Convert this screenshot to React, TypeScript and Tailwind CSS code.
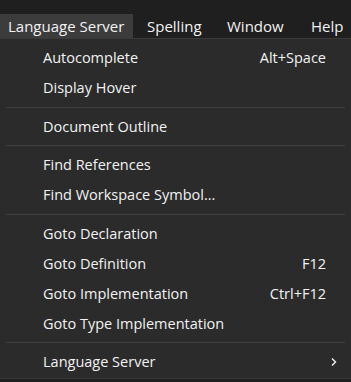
import React from "react";

type Item = { label: string; shortcut?: string; sub?: boolean } | "sep";

const items: Item[] = [
  { label: "Autocomplete", shortcut: "Alt+Space" },
  { label: "Display Hover" },
  "sep",
  { label: "Document Outline" },
  "sep",
  { label: "Find References" },
  { label: "Find Workspace Symbol..." },
  "sep",
  { label: "Goto Declaration" },
  { label: "Goto Definition", shortcut: "F12" },
  { label: "Goto Implementation", shortcut: "Ctrl+F12" },
  { label: "Goto Type Implementation" },
  "sep",
  { label: "Language Server", sub: true },
];

export default function App() {
  return (
    <div
      className="w-[351px] h-[382px] bg-[#1f1f1f] text-[#f2f2f2] overflow-hidden"
      style={{ fontFamily: '"Open Sans", "Noto Sans", sans-serif' }}
    >
      <div className="h-[14px]" />
      <div className="flex h-[24px] items-center text-[15px] leading-none">
        <div className="h-full w-[133px] bg-[#3c3c3c] flex items-center pl-[8px]">Language Server</div>
        <div className="pl-[14px] w-[80px]">Spelling</div>
        <div className="pl-[14px] w-[84px]">Window</div>
        <div className="pl-[14px]">Help</div>
      </div>
      <div className="border-t border-b border-[#3a3a3a] bg-[#2b2b2b] pt-[4px] pb-[1px] text-[14.5px]">
        {items.map((it, i) =>
          it === "sep" ? (
            <div key={i} className="h-[8.5px] flex items-center px-[6px]">
              <div className="h-px w-full bg-[#3f3f3f]" />
            </div>
          ) : (
            <div key={i} className="h-[30px] flex items-center pl-[43px] pr-[25px]">
              <span className="flex-1">{it.label}</span>
              {it.shortcut && <span>{it.shortcut}</span>}
              {it.sub && (
                <svg width="8" height="10" viewBox="0 0 8 10" className="mr-[-12px]">
                  <path d="M2 1.5 L5.5 5 L2 8.5" stroke="#f2f2f2" strokeWidth="1.4" fill="none" />
                </svg>
              )}
            </div>
          )
        )}
      </div>
    </div>
  );
}
